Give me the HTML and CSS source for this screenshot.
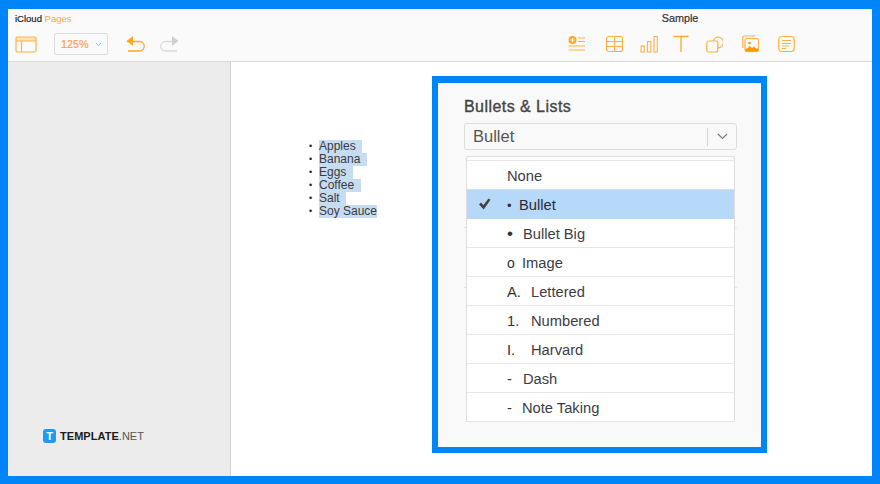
FILE: index.html
```html
<!DOCTYPE html>
<html lang="en">
<head>
<meta charset="utf-8">
<title>iCloud Pages - Bullets &amp; Lists</title>
<link rel="stylesheet" href="styles.css">
</head>
<body>
<div class="frame">
  <header class="toolbar">
    <div class="tb-left">
      <div class="app-name"><b>iCloud</b> <span>Pages</span></div>
      <div class="tb-tools">
        <svg class="ic-view" width="22" height="17" viewBox="0 0 22 17" fill="none" stroke="#ffb048" stroke-width="1.2"><rect x="1.500" y="1.500" width="19" height="3.500" fill="#ffe3bd" stroke="none"/><rect x="1" y="1" width="20" height="15" rx="1.5"/><path d="M1 5h20M6.500 5v11"/></svg>
        <div class="zoom-box"><span>125%</span><svg width="7" height="5" viewBox="0 0 7 5" fill="none" stroke="#ffa94a" stroke-width="1"><path d="M1 1l2.500 2.500L6 1"/></svg></div>
        <svg class="ic-undo" width="20" height="18" viewBox="0 0 20 18" fill="none" stroke="#ffa726" stroke-width="1.300"><path d="M1 6.500h12.500a4.500 4.500 0 0 1 0 9.500H2"/><path d="M7 1v10L0.500 6z" fill="#ffa726" stroke="none"/></svg>
        <svg class="ic-redo" width="20" height="18" viewBox="0 0 20 18" fill="none" stroke="#d9d9d9" stroke-width="1.300"><path d="M18 6.500H6.500a4.500 4.500 0 0 0 0 9.500H18"/><path d="M13 1v10l6.500-5z" fill="#cfcfcf" stroke="none"/></svg>
      </div>
    </div>
    <div class="tb-right">
      <div class="doc-name">Sample</div>
      <div class="tb-icons">
        <svg width="17" height="18" viewBox="0 0 17 18" fill="none" stroke="#ffb048" stroke-width="1.200"><circle cx="4.500" cy="5" r="4" fill="#ffa726" stroke="none"/><path d="M2.500 5h4M4.500 3v4" stroke="#fff"/><path d="M10 3h7M10 6.500h7M0.500 11h16.500M0.500 15h16.500"/></svg>
        <svg class="i-table" width="17" height="18" viewBox="0 0 17 18" fill="none" stroke="#ffb048" stroke-width="1.200"><rect x="0.600" y="1.500" width="15.800" height="15" rx="2"/><path d="M0.600 6.500h15.800M0.600 11.500h15.800M8.500 1.500v15"/></svg>
        <svg class="i-chart" width="18" height="18" viewBox="0 0 18 18" fill="none" stroke="#ffb048" stroke-width="1.100"><rect x="1" y="11" width="3.300" height="6"/><rect x="7.500" y="6.500" width="3.300" height="10.500"/><rect x="14" y="1.500" width="3.300" height="15.500"/></svg>
        <svg class="i-text" width="16" height="18" viewBox="0 0 16 18" fill="none" stroke="#ffa726" stroke-width="1.300"><path d="M0.500 1.500h15M8 1.500V17"/></svg>
        <svg class="i-shape" width="17" height="18" viewBox="0 0 17 18" fill="none" stroke="#ffb048" stroke-width="1.200"><path d="M7 6a5.300 5.300 0 1 1 5 6.800"/><rect x="0.800" y="6" width="11" height="11" rx="2" fill="#fafafa"/></svg>
        <svg class="i-media" width="17" height="18" viewBox="0 0 17 18" fill="none" stroke="#ffb048" stroke-width="1.200"><path d="M0.800 13V2.500A1.500 1.500 0 0 1 2.300 1H13.500"/><rect x="3" y="3.500" width="13.500" height="13" rx="2" fill="#fafafa"/><path d="M3.500 16l4-5 2.500 2 2-1.500 4 4.500z" fill="#ff9800" stroke="none"/><rect x="3.500" y="13.500" width="12.500" height="3" fill="#ff9800" stroke="none"/><circle cx="7.500" cy="8" r="1.300" fill="#ff9800" stroke="none"/></svg>
        <svg class="i-notes" width="17" height="18" viewBox="0 0 17 18" fill="none" stroke="#ffb048" stroke-width="1.200"><rect x="0.700" y="1.500" width="15.600" height="15" rx="3"/><path d="M4 5.500h9M4 8.500h9M4 11h7.500M4 13.500h4"/></svg>
      </div>
    </div>
  </header>
  <main class="workspace">
    <aside class="sidebar">
      <div class="brand">
        <span class="brand-mark">T</span><span class="brand-name"><b>TEMPLATE</b>.NET</span>
      </div>
    </aside>
    <section class="canvas">
      <ul class="doc-list">
        <li><mark>Apples&nbsp;&nbsp;</mark></li>
        <li><mark>Banana&nbsp;&nbsp;</mark></li>
        <li><mark>Eggs&nbsp;&nbsp;</mark></li>
        <li><mark>Coffee&nbsp;&nbsp;</mark></li>
        <li><mark>Salt&nbsp;&nbsp;</mark></li>
        <li><mark>Soy Sauce</mark></li>
      </ul>
      <div class="callout">
        <h2 class="panel-title">Bullets &amp; Lists</h2>
        <div class="select">
          <span class="select-value">Bullet</span>
          <span class="select-arrow"><svg width="11" height="7" viewBox="0 0 11 7" fill="none" stroke="#777" stroke-width="1.100"><path d="M1 1l4.500 4.500L10 1"/></svg></span>
        </div>
        <div class="menu-wrap">
          <i class="ghost-line ghost-a"></i>
          <i class="ghost-line ghost-b"></i>
          <div class="menu">
            <div class="row"><span class="mk w-none"></span>None</div>
            <div class="row sel"><svg class="check" width="13" height="12" viewBox="0 0 13 12"><path d="M1 6.500l2-2 2.500 2.600L10.500 0.500l2 1.300-6.800 9.700z" fill="#444"/></svg><span class="mk w-b">•</span>Bullet</div>
            <div class="row after-sel"><span class="mk w-bb">•</span>Bullet Big</div>
            <div class="row"><span class="mk w-o">o</span>Image</div>
            <div class="row"><span class="mk w-n">A.</span>Lettered</div>
            <div class="row"><span class="mk w-n">1.</span>Numbered</div>
            <div class="row"><span class="mk w-n">I.</span>Harvard</div>
            <div class="row"><span class="mk w-d">-</span>Dash</div>
            <div class="row"><span class="mk w-t">-</span>Note Taking</div>
          </div>
        </div>
      </div>
    </section>
  </main>
</div>
</body>
</html>
```
FILE: styles.css
```css
* { box-sizing: border-box; }
html, body { margin: 0; height: 100%; }
body { width: 880px; height: 484px; overflow: hidden; font-family: "Liberation Sans", Arial, sans-serif; background: #fff; }
.frame { width: 880px; height: 484px; border: 8px solid #0085f9; border-top-width: 9px; display: flex; flex-direction: column; }
.toolbar { height: 53px; flex: none; background: #fafafa; border-bottom: 1px solid #d9d9d9; display: flex; justify-content: space-between; padding: 0 77px 0 7px; }
.tb-left, .tb-right { display: flex; flex-direction: column; }
.tb-right { align-items: center; }
.app-name { font-size: 9.500px; line-height: 11px; margin-top: 4px; color: #222; }
.app-name b { font-weight: 400; -webkit-text-stroke: 0.2px #222; }
.app-name span { color: #ffa733; }
.doc-name { font-size: 10.800px; line-height: 11px; margin: 4px 3px 0 0; color: #333; -webkit-text-stroke: 0.2px #333; }
.tb-tools { display: flex; align-items: center; margin-top: 9px; height: 22px; }
.zoom-box { width: 54px; height: 22px; margin-left: 17px; border: 1px solid #dcdcdc; border-radius: 2px; display: flex; align-items: center; padding-left: 6px; gap: 6px; font-size: 10.800px; color: #ff9a45; -webkit-text-stroke: 0.15px #ff9a45; }
.ic-undo { margin-left: 18px; }
.ic-redo { margin-left: 13px; }
.tb-icons { display: flex; align-items: center; margin-top: 9px; height: 22px; }
.i-table { margin-left: 21px; }
.i-chart { margin-left: 17px; }
.i-text { margin-left: 15px; }
.i-shape { margin-left: 17px; }
.i-media { margin-left: 19px; }
.i-notes { margin-left: 19px; }
.workspace { flex: 1; display: flex; min-height: 0; }
.sidebar { width: 223px; flex: none; background: #ececec; border-right: 1px solid #d2d2d2; display: flex; align-items: flex-end; padding: 0 0 33px 35px; }
.brand { display: flex; align-items: center; gap: 4px; height: 14px; }
.brand-mark { width: 13px; height: 14px; border-radius: 3px; background: #1a9bf5; color: #fff; font-size: 11px; font-weight: 700; line-height: 14px; text-align: center; }
.brand-name { font-size: 11px; color: #555; letter-spacing: 0.04px; }
.brand-name b { color: #1c1c1c; }
.canvas { flex: 1; position: relative; background: #fff; min-width: 0; }
.doc-list { list-style: none; margin: 0; padding: 78px 0 0 78px; font-size: 12px; line-height: 13px; color: #333; }
.doc-list li { display: flex; height: 13px; }
.doc-list li::before { content: "•"; width: 10px; flex: none; font-size: 9px; color: #222; }
.doc-list mark { background: #c6dcf0; color: #3a3a44; }
.callout { position: absolute; left: 201px; top: 14px; width: 335px; height: 377px; border: 6px solid #0085f9; border-top-width: 7px; background: #f9f9f9; padding: 15px 24px 0 26px; display: flex; flex-direction: column; }
.panel-title { margin: 0; font-size: 16px; line-height: 18px; font-weight: 400; color: #444; letter-spacing: 0.45px; -webkit-text-stroke: 0.35px #444; }
.select { height: 27px; margin-top: 7px; flex: none; border: 1px solid #dcdcdc; border-radius: 3px; display: flex; align-items: center; justify-content: space-between; padding-left: 8px; font-size: 16.500px; color: #555; background: #f9f9f9; }
.select-arrow { width: 29px; height: 18px; border-left: 1px solid #d5d5d5; display: flex; align-items: center; justify-content: center; }
.menu-wrap { position: relative; margin: 6px 2px 0; height: 266px; flex: none; }
.ghost-line { position: absolute; left: -2px; right: -2px; height: 1px; background: #e2e2e2; }
.ghost-a { top: 71px; }
.ghost-b { top: 131px; }
.menu { position: relative; height: 266px; border: 1px solid #dedede; border-bottom: 0; border-radius: 3px 3px 0 0; background: #fff; padding-top: 3px; }
.row { height: 29px; display: flex; align-items: center; padding: 2px 0 0 40px; position: relative; font-size: 14.700px; color: #3c3c44; border-top: 1px solid #e6e6e6; }
.row:last-child { border-bottom: 1px solid #e6e6e6; height: 30px; }
.row.sel { background: #b6d8f9; color: #2a2a38; border-top-color: #cfe0f0; }
.row.after-sel { border-top-color: #b6d8f9; }
.mk { flex: none; color: #333; }
.w-none { width: 0; }
.w-b { width: 12px; font-size: 13px; }
.w-bb { width: 16px; font-size: 17px; }
.w-o { width: 15px; font-size: 14px; }
.w-n { width: 24px; }
.w-d { width: 16px; }
.w-t { width: 15px; }
.check { position: absolute; left: 11px; top: 8px; }
```
